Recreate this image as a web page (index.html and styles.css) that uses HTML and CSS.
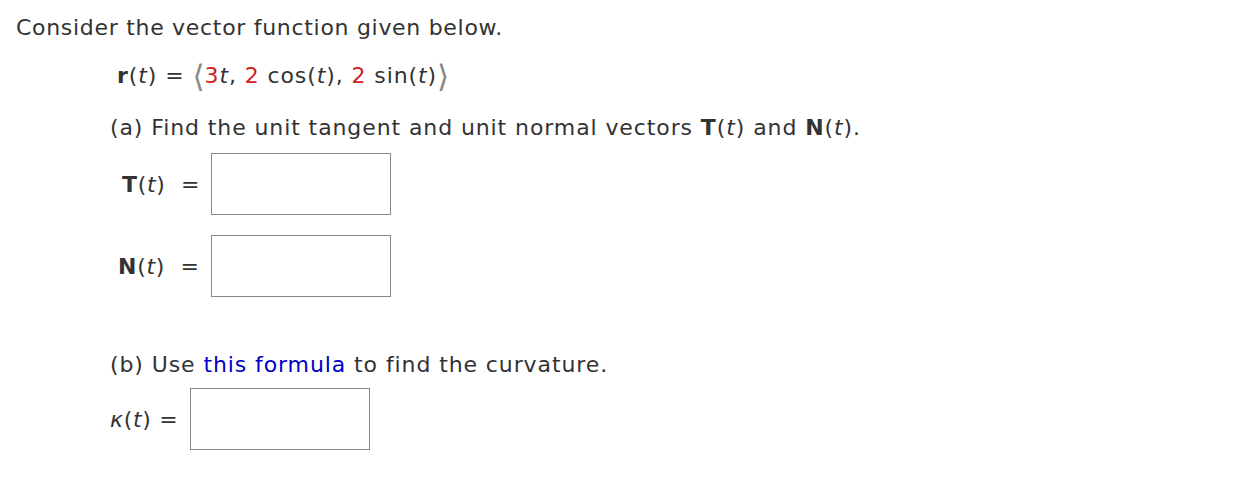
FILE: index.html
```html
<!DOCTYPE html>
<html>
<head>
<meta charset="utf-8">
<link rel="stylesheet" href="styles.css">
</head>
<body>
<div class="page">
  <p class="intro">Consider the vector function given below.</p>
  <div class="formula"><b class="bold">r</b>(<i>t</i>) = <span class="br">⟨</span><span class="red">3</span><i>t</i>, <span class="red">2</span> cos(<i>t</i>), <span class="red">2</span> sin(<i>t</i>)<span class="br">⟩</span></div>
  <div class="part">
    <p class="q q-a">(a) Find the unit tangent and unit normal vectors <b>T</b>(<i>t</i>) and <b>N</b>(<i>t</i>).</p>
    <div class="row row-t">
      <span class="label"><b>T</b>(<i>t</i>)&nbsp;&nbsp;=</span>
      <span class="box"></span>
    </div>
    <div class="row row-n">
      <span class="label"><b>N</b>(<i>t</i>)&nbsp;&nbsp;=</span>
      <span class="box"></span>
    </div>
    <p class="q q-b">(b) Use <span class="link">this formula</span> to find the curvature.</p>
    <div class="row row-k">
      <span class="label"><i>κ</i>(<i>t</i>) =</span>
      <span class="box"></span>
    </div>
  </div>
</div>
</body>
</html>
```

FILE: styles.css
```css
html, body {
  margin: 0;
  padding: 0;
  background: #fff;
}
.page {
  font-family: "DejaVu Sans", Verdana, sans-serif;
  font-size: 22px;
  letter-spacing: 0.7px;
  color: #333;
  padding: 15px 0 0 16px;
}
p { margin: 0; }
.intro {
  line-height: 26px;
}
.formula {
  margin: 22px 0 0 101px;
  line-height: 26px;
  height: 26px;
  display: flex;
  align-items: center;
  white-space: pre;
  letter-spacing: 0.9px;
}
.formula .bold { font-weight: bold; }
.red { color: #cc2222; }
.br {
  color: #888;
  font-size: 31px;
  line-height: 26px;
  letter-spacing: 0;
}
.part {
  margin-left: 94px;
}
.q {
  line-height: 26px;
  letter-spacing: 0.9px;
}
.q-a { margin-top: 26px; }
.row {
  display: flex;
  align-items: center;
}
.row-t { margin-top: 12px; padding-left: 12px; }
.row-n { margin-top: 20px; padding-left: 8px; }
.label {
  white-space: nowrap;
}
.row-t .label { width: 89px; }
.row-n .label { width: 93px; }
.row-k .label { width: 80px; }
.box {
  display: block;
  width: 178px;
  height: 60px;
  border: 1px solid #888;
}
.q-b { margin-top: 55px; }
.row-k { margin-top: 10px; }
.link { color: #0000c8; }
```
